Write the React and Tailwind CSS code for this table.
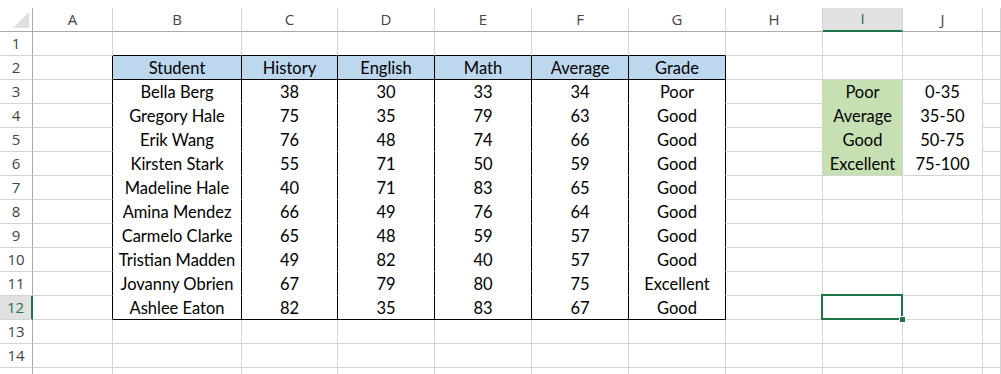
import React from "react";
import clsx from "clsx";

const COLS = ["A", "B", "C", "D", "E", "F", "G", "H", "I", "J", "K"];

const TABLE = [
  ["Student", "History", "English", "Math", "Average", "Grade"],
  ["Bella Berg", "38", "30", "33", "34", "Poor"],
  ["Gregory Hale", "75", "35", "79", "63", "Good"],
  ["Erik Wang", "76", "48", "74", "66", "Good"],
  ["Kirsten Stark", "55", "71", "50", "59", "Good"],
  ["Madeline Hale", "40", "71", "83", "65", "Good"],
  ["Amina Mendez", "66", "49", "76", "64", "Good"],
  ["Carmelo Clarke", "65", "48", "59", "57", "Good"],
  ["Tristian Madden", "49", "82", "40", "57", "Good"],
  ["Jovanny Obrien", "67", "79", "80", "75", "Excellent"],
  ["Ashlee Eaton", "82", "35", "83", "67", "Good"],
];

const LEGEND = [
  ["Poor", "0-35"],
  ["Average", "35-50"],
  ["Good", "50-75"],
  ["Excellent", "75-100"],
];

function cellInfo(row, ci) {
  const col = COLS[ci];
  let text = "";
  let bg = "bg-white";
  let right = "border-r-[#d4d4d4]";
  let bottom = "border-b-[#d4d4d4]";

  const inTableRow = row >= 2 && row <= 12;
  const inTableCol = ci >= 1 && ci <= 6;

  if (inTableRow && inTableCol) {
    text = TABLE[row - 2][ci - 1];
    right = "border-r-black";
    if (row === 2) {
      bg = "bg-[#bdd7ee]";
      bottom = "border-b-black";
    } else if (row === 12) {
      bottom = "border-b-black";
    } else {
      bottom = "border-b-white";
    }
  }
  if (row === 1 && inTableCol) bottom = "border-b-black";
  if (inTableRow && col === "A") right = "border-r-black";

  const inLegendRow = row >= 3 && row <= 6;
  if (inLegendRow && col === "I") {
    text = LEGEND[row - 3][0];
    bg = "bg-[#c6e0b4]";
    bottom = row === 6 ? "border-b-[#d4d4d4]" : "border-b-[#c6e0b4]";
  }
  if (inLegendRow && col === "J") {
    text = LEGEND[row - 3][1];
    bottom = row === 6 ? "border-b-[#d4d4d4]" : "border-b-white";
  }
  if (inLegendRow && col === "H") right = "border-r-[#c6e0b4]";

  return { text, bg, right, bottom };
}

function Corner() {
  return (
    <div className="h-6 border-r border-b border-r-[#ababab] border-b-[#ababab] bg-white relative">
      <svg width="32" height="23" className="absolute left-0 top-0">
        <polygon points="13,20 29,4 29,20" fill="#dfdfdf" />
      </svg>
    </div>
  );
}

export default function App() {
  const rows = Array.from({ length: 15 }, (_, i) => i + 1);
  return (
    <div className="w-[1001px] h-[374px] overflow-hidden bg-white pt-2">
      <div
        className="grid grid-cols-[33px_80px_129px_96px_97px_97px_97px_97px_97px_80px_80px_1fr] text-black"
        style={{ fontFamily: "Lato, 'Liberation Sans', sans-serif" }}
      >
        <Corner />
        {COLS.map((c) => (
          <div
            key={c}
            className={clsx(
              "h-6 flex items-center justify-center border-r border-b border-r-[#d4d4d4] text-[15px] pb-px overflow-hidden",
              c === "I"
                ? "bg-[#e1e1e1] border-b-2 border-b-[#217346] text-[#217346]"
                : "bg-white border-b-[#ababab] text-[#444]"
            )}
            style={{ fontFamily: "'Open Sans', 'Noto Sans', sans-serif" }}
          >
            {c === "K" ? "" : c}
          </div>
        ))}

        {rows.map((r) => (
          <React.Fragment key={r}>
            <div
              className={clsx(
                "h-6 flex items-center justify-center border-b border-b-[#d4d4d4] text-[15px]",
                r === 12
                  ? "bg-[#e1e1e1] border-r-2 border-r-[#217346] text-[#217346]"
                  : "bg-white border-r border-r-[#ababab] text-[#444]"
              )}
              style={{ fontFamily: "'Open Sans', 'Noto Sans', sans-serif" }}
            >
              {r <= 14 ? r : ""}
            </div>
            {COLS.map((c, ci) => {
              const info = cellInfo(r, ci);
              const selected = r === 12 && c === "I";
              return (
                <div
                  key={c}
                  className={clsx(
                    "h-6 flex items-center justify-center border-r border-b text-[16.5px] leading-none pt-px whitespace-nowrap",
                    selected ? "relative z-10" : "relative",
                    info.bg,
                    info.right,
                    info.bottom
                  )}
                >
                  {info.text}
                  {selected && (
                    <>
                      <div className="absolute left-[-2px] top-[-2px] w-[82px] h-[26px] border-2 border-[#217346]" />
                      <div className="absolute left-[76px] top-[20px] w-[7px] h-[7px] bg-[#217346] border border-white" />
                    </>
                  )}
                </div>
              );
            })}
          </React.Fragment>
        ))}
      </div>
    </div>
  );
}
